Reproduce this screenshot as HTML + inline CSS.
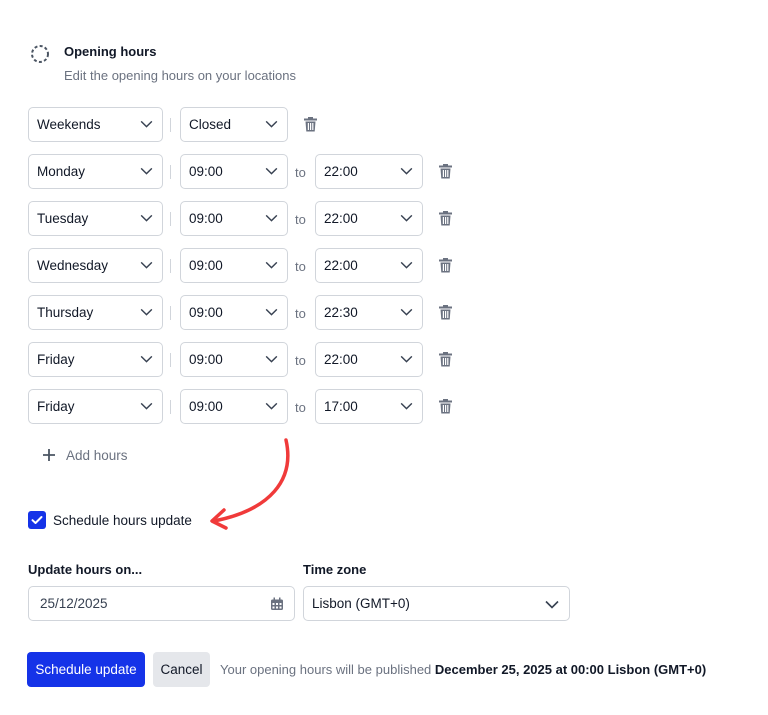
<!DOCTYPE html>
<html><head><style>
body{margin:0;width:768px;height:715px;background:#fff;font-family:"Liberation Sans",sans-serif;position:relative;overflow:hidden;color:#111827}
.a{position:absolute}
.sel{position:absolute;height:34px;border:1px solid #d1d5db;border-radius:5px;box-sizing:border-box;font-size:13.5px;line-height:34px;padding-left:8px;background:#fff}
.sel svg{position:absolute;right:9px;top:12px}
.bar{position:absolute;width:1px;height:14px;background:#d1d5db}
.to{position:absolute;font-size:13px;color:#6b7280}
.tr{position:absolute}
</style></head><body>
<svg class="a" style="left:30px;top:44px" width="20" height="20" viewBox="0 0 20 20"><circle cx="10" cy="10" r="8" fill="none" stroke="#4b5563" stroke-width="2" stroke-dasharray="3 2.3"/></svg>
<div class="a" style="left:64px;top:44px;font-size:13px;font-weight:bold">Opening hours</div>
<div class="a" style="left:64px;top:68px;font-size:13px;color:#6b7280">Edit the opening hours on your locations</div>
<div id="rows"></div>
<svg class="a" style="left:42px;top:448px" width="14" height="14" viewBox="0 0 14 14"><path d="M7 1v12M1 7h12" stroke="#4b5563" stroke-width="1.8"/></svg>
<div class="a" style="left:66px;top:448px;font-size:13.5px;color:#6b7280">Add hours</div>
<svg class="a" style="left:200px;top:430px" width="100" height="100" viewBox="0 0 100 100"><path d="M86 10 C95 50 70 80 14 91" fill="none" stroke="#f03a3a" stroke-width="3.5" stroke-linecap="round"/><path d="M24 80 L12 91 L26 98" fill="none" stroke="#f03a3a" stroke-width="3.5" stroke-linecap="round" stroke-linejoin="round"/></svg>
<div class="a" style="left:28px;top:511px;width:18px;height:18px;background:#1533e8;border-radius:3px"><svg width="18" height="18" viewBox="0 0 18 18"><path d="M4.5 9.2l3 2.8 6-6" fill="none" stroke="#fff" stroke-width="2" stroke-linecap="round" stroke-linejoin="round"/></svg></div>
<div class="a" style="left:53px;top:513px;font-size:13.5px">Schedule hours update</div>
<div class="a" style="left:28px;top:562px;font-size:13px;font-weight:bold">Update hours on...</div>
<div class="a" style="left:303px;top:562px;font-size:13px;font-weight:bold">Time zone</div>
<div class="sel" style="left:28px;top:586px;width:267px;height:35px;padding-left:11px;color:#374151">25/12/2025<svg style="right:10px;top:10px" width="14" height="14" viewBox="0 0 14 14"><rect x="1" y="2.5" width="12" height="10.5" rx="1.5" fill="#6b7280"/><rect x="3.5" y="0.5" width="1.5" height="3" fill="#6b7280"/><rect x="9" y="0.5" width="1.5" height="3" fill="#6b7280"/><g fill="#fff"><rect x="2.5" y="6" width="2" height="2"/><rect x="6" y="6" width="2" height="2"/><rect x="9.5" y="6" width="2" height="2"/><rect x="2.5" y="9.5" width="2" height="2"/><rect x="6" y="9.5" width="2" height="2"/><rect x="9.5" y="9.5" width="2" height="2"/></g></svg></div>
<div class="sel" style="left:303px;top:586px;width:267px;height:35px">Lisbon (GMT+0)<svg style="right:10px;top:13px" width="14" height="9" viewBox="0 0 14 9"><path d="M1 1.5l6 6 6-6" fill="none" stroke="#374151" stroke-width="1.6"/></svg></div>
<div class="a" style="left:27px;top:652px;width:118px;height:35px;background:#1533e8;border-radius:4px;color:#fff;font-size:13.5px;line-height:35px;text-align:center">Schedule update</div>
<div class="a" style="left:153px;top:652px;width:57px;height:35px;background:#e5e7eb;border-radius:4px;font-size:13.5px;line-height:35px;text-align:center">Cancel</div>
<div class="a" style="left:220px;top:662px;font-size:13px;color:#6b7280;white-space:nowrap">Your opening hours will be published <b style="color:#111827">December 25, 2025 at 00:00 Lisbon (GMT+0)</b></div>
<script>
var rows=[["Weekends","Closed"],["Monday","09:00","22:00"],["Tuesday","09:00","22:00"],["Wednesday","09:00","22:00"],["Thursday","09:00","22:30"],["Friday","09:00","22:00"],["Friday","09:00","17:00"]];
var ch='<svg width="13" height="8" viewBox="0 0 14 9"><path d="M1 1.5l6 6 6-6" fill="none" stroke="#374151" stroke-width="1.6"/></svg>';
var tr='<svg width="13" height="15" viewBox="0 0 13 15"><rect x="0" y="1.5" width="13" height="2" fill="#6b7280"/><rect x="4" y="0" width="5" height="2" fill="#6b7280"/><path d="M1.5 4.5h10l-0.8 10h-8.4z" fill="#6b7280"/><g fill="#fff"><rect x="3.8" y="6" width="1.2" height="7"/><rect x="6" y="6" width="1.2" height="7"/><rect x="8.2" y="6" width="1.2" height="7"/></g></svg>';
var h='';
rows.forEach(function(r,i){var t=107+i*47;
h+='<div class="sel" style="left:28px;top:'+t+'px;width:135px;height:35px">'+r[0]+ch+'</div>';
h+='<div class="bar" style="left:170px;top:'+(t+11)+'px"></div>';
h+='<div class="sel" style="left:180px;top:'+t+'px;width:108px;height:35px">'+r[1]+ch+'</div>';
var tx=r.length>2?439:304;
if(r.length>2){h+='<div class="to" style="left:295px;top:'+(t+11)+'px">to</div><div class="sel" style="left:315px;top:'+t+'px;width:108px;height:35px">'+r[2]+ch+'</div>';}
h+='<div class="tr" style="left:'+tx+'px;top:'+(t+10)+'px">'+tr+'</div>';});
document.getElementById('rows').innerHTML=h;
</script>
</body></html>
